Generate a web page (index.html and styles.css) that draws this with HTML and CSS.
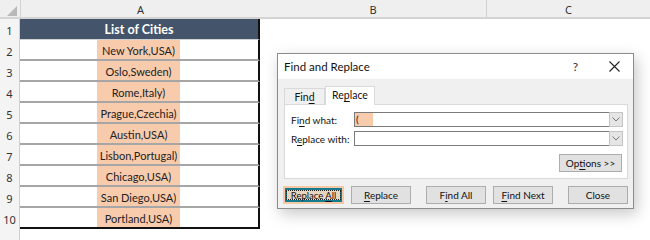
FILE: index.html
```html
<!DOCTYPE html>
<html lang="en">
<head>
    <meta charset="UTF-8">
    <title>List of Cities - Find and Replace</title>
    <link rel="stylesheet" href="styles.css">
</head>
<body>
    <div class="sheet">
        <div class="corner">
            <svg width="20" height="19" viewBox="0 0 20 19"><polygon points="7,16 17,6 17,16" fill="#b9b9b9"/></svg>
        </div>
        <div class="col-head col-a">A</div>
        <div class="col-head col-b">B</div>
        <div class="col-head">C</div>

        <div class="row-head">1</div><div class="cell-a title">List of Cities</div><div class="cell"></div><div class="cell"></div>
        <div class="row-head">2</div><div class="cell-a"><span class="mark">New York,USA)</span></div><div class="cell"></div><div class="cell"></div>
        <div class="row-head">3</div><div class="cell-a"><span class="mark">Oslo,Sweden)</span></div><div class="cell"></div><div class="cell"></div>
        <div class="row-head">4</div><div class="cell-a"><span class="mark">Rome,Italy)</span></div><div class="cell"></div><div class="cell"></div>
        <div class="row-head">5</div><div class="cell-a"><span class="mark">Prague,Czechia)</span></div><div class="cell"></div><div class="cell"></div>
        <div class="row-head">6</div><div class="cell-a"><span class="mark">Austin,USA)</span></div><div class="cell"></div><div class="cell"></div>
        <div class="row-head">7</div><div class="cell-a"><span class="mark">Lisbon,Portugal)</span></div><div class="cell"></div><div class="cell"></div>
        <div class="row-head">8</div><div class="cell-a"><span class="mark">Chicago,USA)</span></div><div class="cell"></div><div class="cell"></div>
        <div class="row-head">9</div><div class="cell-a"><span class="mark">San Diego,USA)</span></div><div class="cell"></div><div class="cell"></div>
        <div class="row-head">10</div><div class="cell-a last"><span class="mark">Portland,USA)</span></div><div class="cell"></div><div class="cell"></div>
        <div class="row-head"></div><div class="cell"></div><div class="cell"></div><div class="cell"></div>

        <div class="dialog">
            <div class="titlebar">
                <span class="title-text">Find and Replace</span>
                <span class="help">?</span>
                <svg class="close-x" width="11" height="11" viewBox="0 0 11 11"><path d="M0.5 0.5 L10.5 10.5 M10.5 0.5 L0.5 10.5" stroke="#222" stroke-width="1.1" fill="none"/></svg>
            </div>
            <div class="dialog-body">
                <div class="tabs">
                    <div class="tab">Fin<u>d</u></div>
                    <div class="tab active">Re<u>p</u>lace</div>
                </div>
                <div class="panel">
                    <div class="field">
                        <label>Fi<u>n</u>d what:</label>
                        <div class="combo">
                            <span class="combo-text"><span class="hl">(</span></span>
                            <span class="drop"><svg width="8" height="5" viewBox="0 0 8 5"><path d="M0.5 0.5 L4 4 L7.5 0.5" stroke="#777" fill="none"/></svg></span>
                        </div>
                    </div>
                    <div class="field">
                        <label>R<u>e</u>place with:</label>
                        <div class="combo">
                            <span class="combo-text"></span>
                            <span class="drop"><svg width="8" height="5" viewBox="0 0 8 5"><path d="M0.5 0.5 L4 4 L7.5 0.5" stroke="#777" fill="none"/></svg></span>
                        </div>
                    </div>
                    <div class="options-row">
                        <button class="btn options">Op<u>t</u>ions &gt;&gt;</button>
                    </div>
                </div>
                <div class="buttons">
                    <button class="btn default"><span class="focus">Replace <u>A</u>ll</span></button>
                    <button class="btn gap-s"><u>R</u>eplace</button>
                    <button class="btn gap-l">F<u>i</u>nd All</button>
                    <button class="btn gap-s"><u>F</u>ind Next</button>
                    <button class="btn gap-l">Close</button>
                </div>
            </div>
        </div>
    </div>
</body>
</html>
```

FILE: styles.css
```css
body {
    margin: 0;
    font-family: "Noto Sans", sans-serif;
    background-color: #fff;
}
u {
    text-decoration-thickness: 1px;
    text-underline-offset: 2px;
}
.sheet {
    position: relative;
    display: grid;
    grid-template-columns: 20px 240px 227px 163px;
    grid-template-rows: 19px repeat(11, 21px);
    width: 650px;
    height: 240px;
    overflow: hidden;
}
.corner {
    background-color: #efefef;
    border-bottom: 2px solid #d4d4d4;
    box-sizing: border-box;
}
.corner svg {
    display: block;
}
.col-head {
    background-color: #efefef;
    border-bottom: 2px solid #d4d4d4;
    box-sizing: border-box;
    font-size: 11px;
    color: #333;
    text-align: center;
    line-height: 19px;
}
.col-a {
    border-left: 1px solid #d4d4d4;
}
.col-b {
    border-right: 1px solid #cfcfcf;
}
.row-head {
    background-color: #f4f4f4;
    border-right: 1px solid #cfcfcf;
    box-sizing: border-box;
    font-size: 11px;
    color: #333;
    text-align: center;
    line-height: 23px;
}
.cell {
    background-color: #fff;
}
.cell-a {
    display: flex;
    justify-content: center;
    border-right: 2px solid #111;
    border-bottom: 2px solid #a6a6a6;
    box-sizing: border-box;
    font-family: Lato, sans-serif;
    font-size: 11px;
    color: #222;
}
.cell-a.title {
    background-color: #44546a;
    color: #fff;
    font-weight: bold;
    font-size: 12.5px;
    align-items: center;
    border-bottom: 1px solid #d0d0d0;
}
.cell-a.last {
    border-bottom-color: #111;
}
.mark {
    display: block;
    width: 83px;
    margin-left: -1px;
    background-color: #f8cbad;
    text-align: center;
    white-space: nowrap;
    line-height: 20px;
    padding-top: 1px;
}

/* dialog */
.dialog {
    position: absolute;
    left: 277px;
    top: 53px;
    width: 357px;
    height: 156px;
    box-sizing: border-box;
    border: 1px solid #8c8c8c;
    background-color: #f0f0f0;
    box-shadow: 3px 5px 14px rgba(0,0,0,0.22);
    font-family: Lato, sans-serif;
    font-size: 10px;
    color: #111;
    white-space: nowrap;
}
.titlebar {
    display: flex;
    align-items: center;
    height: 25px;
    background-color: #fff;
    padding-left: 6px;
    padding-bottom: 1px;
    box-sizing: border-box;
}
.title-text {
    flex: 1;
    font-size: 11.5px;
}
.help {
    font-size: 12px;
    margin-right: 31px;
    color: #333;
}
.close-x {
    margin-right: 13px;
}
.dialog-body {
    padding: 7px 5px 0 5px;
}
.tabs {
    display: flex;
    align-items: flex-end;
    height: 18px;
    padding-left: 1px;
}
.tab {
    width: 41px;
    height: 16px;
    box-sizing: border-box;
    border: 1px solid #d9d9d9;
    border-bottom: none;
    line-height: 16px;
    text-align: center;
    font-size: 10.5px;
}
.tab.active {
    width: 50px;
    height: 19px;
    background-color: #fff;
    line-height: 17px;
    margin-bottom: -1px;
    position: relative;
}
.panel {
    margin-left: 1px;
    width: 344px;
    height: 75px;
    box-sizing: border-box;
    background-color: #fff;
    border: 1px solid #d9d9d9;
    padding: 7px 4px 0 6px;
}
.field {
    display: flex;
    align-items: center;
    height: 15px;
    margin-bottom: 4px;
}
.field label {
    width: 63px;
}
.combo {
    display: flex;
    flex: 1;
    height: 15px;
    box-sizing: border-box;
    border: 1px solid #7a7a7a;
    border-right: none;
}
.combo-text {
    flex: 1;
    display: flex;
}
.hl {
    width: 17px;
    background-color: #f8cbad;
    line-height: 13px;
    padding-left: 1px;
    font-size: 10px;
}
.drop {
    display: flex;
    align-items: center;
    justify-content: center;
    width: 14px;
    margin-top: -1px;
    height: 15px;
    box-sizing: border-box;
    background-color: #e5e5e5;
    border: 1px solid #c4c4c4;
}
.options-row {
    display: flex;
    justify-content: flex-end;
    margin-top: 8px;
    padding-right: 1px;
}
.btn {
    font-family: Lato, sans-serif;
    font-size: 10px;
    color: #111;
    background-color: #e1e1e1;
    border: 1px solid #adadad;
    box-sizing: border-box;
    width: 60px;
    height: 18px;
    padding: 0;
    line-height: 15px;
    white-space: nowrap;
}
.options {
    width: 63px;
}
.buttons {
    display: flex;
    margin-top: 7px;
}
.btn.default {
    width: 57px;
    height: 14px;
    margin: 2px 2px 0 2px;
    border: 2px solid #157c90;
    background-color: #e9d4c0;
    box-shadow: 0 0 0 2px #f5c9a6;
    display: flex;
    padding: 1px 0;
}
.focus {
    flex: 1;
    outline: 1px dotted #222;
    line-height: 10px;
    font-size: 9.5px;
    text-align: center;
}
.gap-s {
    margin-left: 7px;
}
.gap-l {
    margin-left: 15px;
}
```
